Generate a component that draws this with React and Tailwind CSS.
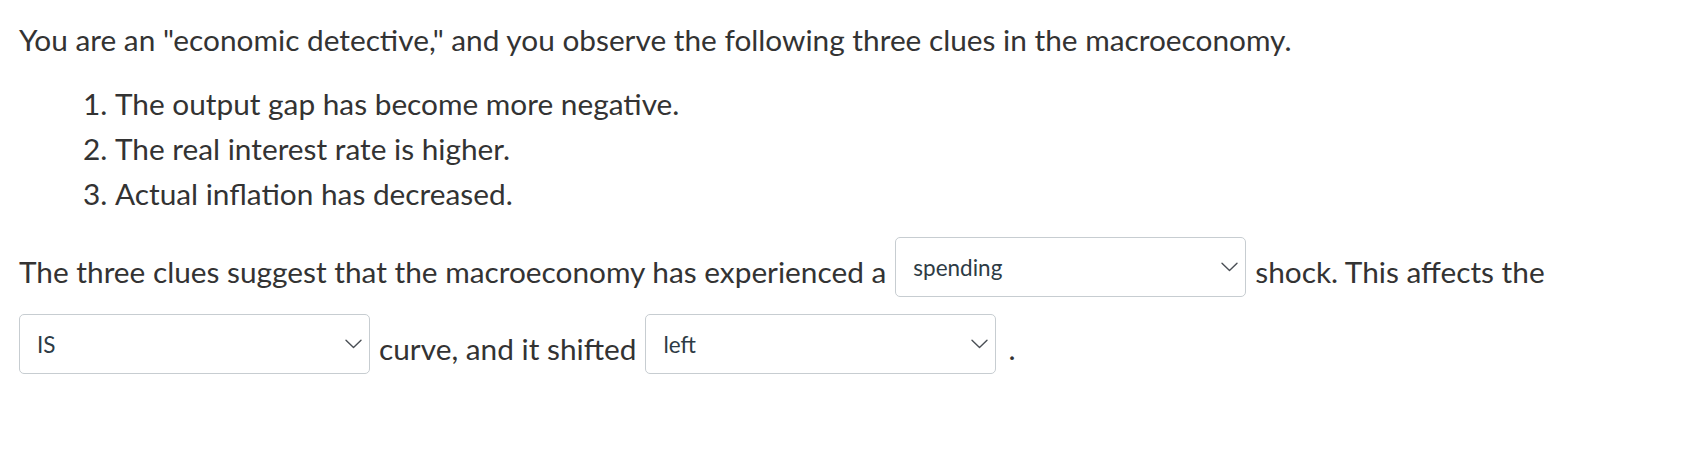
import React from "react";

function Chevron() {
  return (
    <svg width="17" height="10" viewBox="0 0 17 10" fill="none" className="shrink-0">
      <path d="M1 1.2 L8.5 8.5 L16 1.2" stroke="#4a4f55" strokeWidth="1.4" strokeLinecap="round" strokeLinejoin="round" />
    </svg>
  );
}

function FakeSelect({ value }) {
  return (
    <div className="flex h-[60px] w-[351px] shrink-0 items-center justify-between rounded-[5px] border border-[#c7cdd1] bg-white pl-[17px] pr-[7px] text-[22.5px] leading-[30px] text-[#2d3b45]">
      <span className="pt-[2px]">{value}</span>
      <Chevron />
    </div>
  );
}

export default function App() {
  return (
    <div
      className="min-h-[456px] w-[1708px] bg-white pl-[19px] pr-[19px] pt-[17px] text-[29.8px] leading-[45px] text-[#333333]"
      style={{ fontFamily: "Lato, 'Open Sans', sans-serif" }}
    >
      <p>You are an "economic detective," and you observe the following three clues in the macroeconomy.</p>
      <ol className="mt-[19px] ml-[64px] list-inside list-decimal">
        <li>The output gap has become more negative.</li>
        <li>The real interest rate is higher.</li>
        <li>Actual inflation has decreased.</li>
      </ol>
      <div className="mt-[21px] flex flex-wrap items-center gap-x-[9px] gap-y-[17px]">
        <span className="pt-[8px]">The three clues suggest that the macroeconomy has experienced a</span>
        <FakeSelect value="spending" />
        <span className="pt-[8px]">shock. This affects the</span>
        <FakeSelect value="IS" />
        <span className="pt-[8px]">curve, and it shifted</span>
        <FakeSelect value="left" />
        <span className="pt-[8px] pl-[3px]">.</span>
      </div>
    </div>
  );
}
